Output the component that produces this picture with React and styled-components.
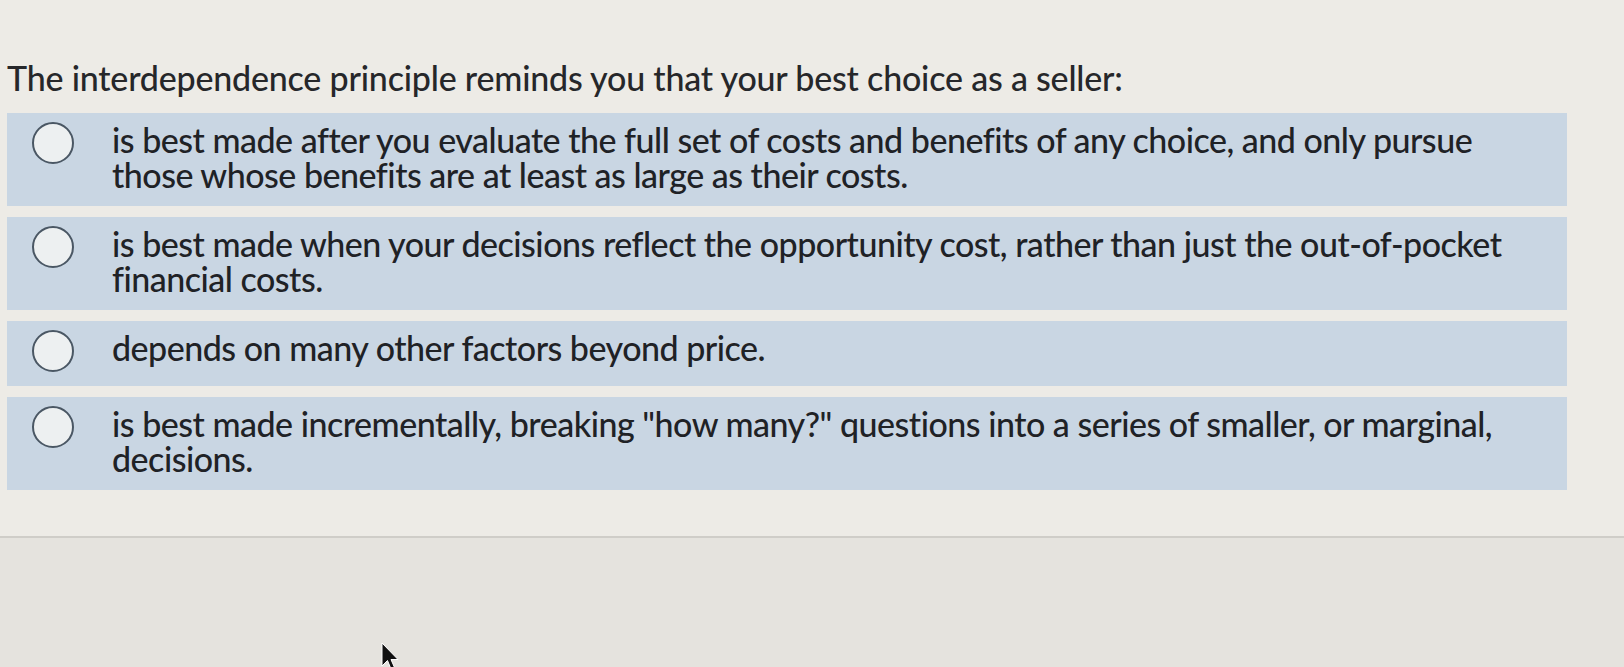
import React from "react";
import styled, { createGlobalStyle } from "styled-components";

const GlobalStyle = createGlobalStyle`
  html, body {
    margin: 0;
    padding: 0;
    background: #edebe6;
  }
  body {
    font-family: "Lato", "Noto Sans", sans-serif;
    color: #202327;
  }
`;

const Page = styled.div`
  min-height: 667px;
  display: flex;
  flex-direction: column;
  position: relative;
  overflow: hidden;
`;

const Question = styled.div`
  padding: 58px 57px 0 7px;
  height: 536px;
  box-sizing: border-box;
`;

const Prompt = styled.p`
  margin: 0;
  font-size: 34px;
  font-weight: 500;
  line-height: 40px;
  letter-spacing: ${(p) => p.$tracking}px;
  color: #26272a;
`;

const Choices = styled.div`
  margin-top: 15px;
  display: flex;
  flex-direction: column;
  gap: 11px;
`;

const Choice = styled.label`
  display: flex;
  align-items: flex-start;
  padding: 9px 47px 14px 25px;
  background: #c9d6e3;
  cursor: pointer;
`;

const Radio = styled.input.attrs({ type: "radio" })`
  appearance: none;
  flex: none;
  margin: 0;
  width: 42px;
  height: 42px;
  border-radius: 50%;
  border: 2.5px solid #4a5764;
  background: #edf0f1;
  box-sizing: border-box;
`;

const ChoiceText = styled.span`
  margin-left: 38px;
  font-size: 34px;
  font-weight: 500;
  line-height: 35px;
  letter-spacing: ${(p) => p.$tracking}px;
  color: #1f2226;
`;

const Lower = styled.div`
  flex: 1;
  border-top: 2px solid #cfcdc8;
  background: #e5e3de;
`;

const Cursor = styled.svg`
  position: absolute;
  left: 381px;
  top: 642px;
  width: 18px;
  height: 28px;
`;

const choices = [
  "is best made after you evaluate the full set of costs and benefits of any choice, and only pursue those whose benefits are at least as large as their costs.",
  "is best made when your decisions reflect the opportunity cost, rather than just the out-of-pocket financial costs.",
  "depends on many other factors beyond price.",
  'is best made incrementally, breaking "how many?" questions into a series of smaller, or marginal, decisions.',
];

export default function App() {
  return (
    <Page>
      <GlobalStyle />
      <Question>
        <Prompt $tracking={-0.2}>
          The interdependence principle reminds you that your best choice as a seller:
        </Prompt>
        <Choices>
          {choices.map((text, i) => (
            <Choice key={i}>
              <Radio name="answer" value={i} />
              <ChoiceText $tracking={-0.5}>{text}</ChoiceText>
            </Choice>
          ))}
        </Choices>
      </Question>
      <Lower />
      <Cursor viewBox="0 0 18 28">
        <path d="M1 1 L1 24 L6.5 18.5 L10 27 L13.5 25.5 L10 17.5 L17 17.5 Z" fill="#111" stroke="#fff" strokeWidth="1" />
      </Cursor>
    </Page>
  );
}
